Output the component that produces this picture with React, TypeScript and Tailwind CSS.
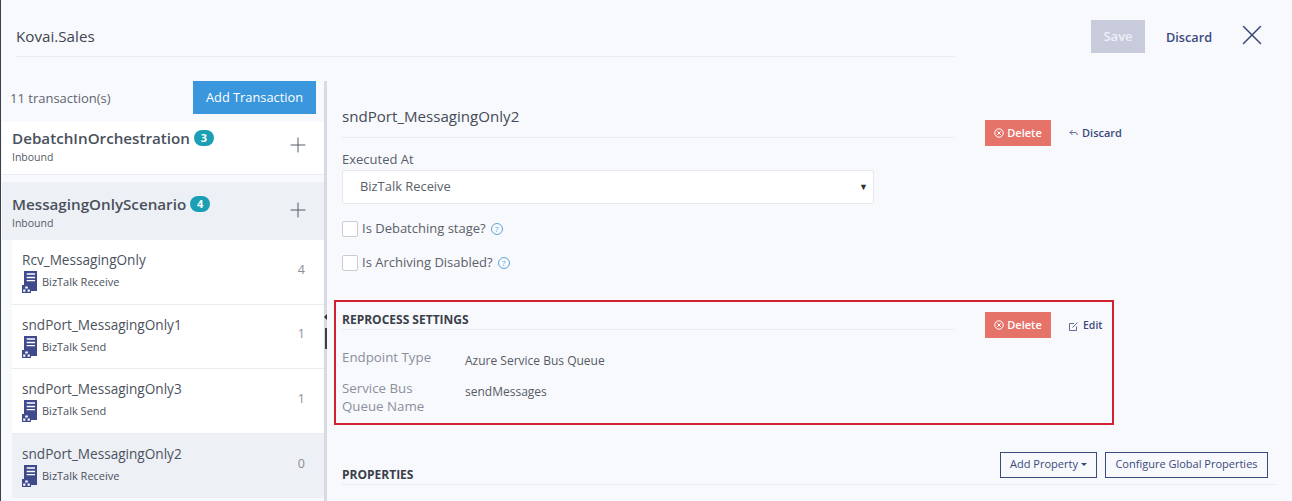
import { Plus, X } from 'lucide-react';

const font = 'font-["Open_Sans",sans-serif]';

const ServerIcon = () => (
  <svg width="16" height="22" viewBox="0 0 16 22" className="shrink-0">
    <path d="M2 0H15V20H2Z" fill="#3f4a8c" />
    <path d="M4.7 3H13M4.7 6.5H13M4.7 9.7H13" stroke="#ffffff" strokeWidth="1.3" />
    <path d="M0 14H9V22H0Z" fill="#3f4a8c" />
    <path d="M3.2 15.5H5.8V17.5H3.2ZM1.2 18.5H3.4V20.7H1.2ZM5.6 18.5H7.8V20.7H5.6Z" fill="#ffffff" />
  </svg>
);

const Badge = ({ n }: { n: number }) => (
  <span className="inline-flex h-[16px] w-[20px] items-center justify-center rounded-full bg-[#1a9fb5] text-[11px] font-bold text-white">
    {n}
  </span>
);

const Group = ({ name, count, active }: { name: string; count: number; active?: boolean }) => (
  <div className={`flex items-start justify-between pl-[10px] pr-[14px] ${active ? 'h-[58px] bg-[#edf0f5] pt-[10px]' : 'h-[53px] border-b border-[#e9ecf1] bg-white pt-[4px]'}`}>
    <div>
      <div className="flex items-center gap-[4px] text-[15.2px] font-semibold leading-[24px] text-[#4a505c]">
        {name} <Badge n={count} />
      </div>
      <div className="text-[10.5px] leading-[14px] text-[#555b66]">Inbound</div>
    </div>
    <Plus size={24} strokeWidth={1} className={`text-[#555b66] ${active ? 'mt-[6px]' : 'mt-[7px]'}`} />
  </div>
);

const Item = ({ name, kind, n, active }: { name: string; kind: string; n: number; active?: boolean }) => (
  <div className={`flex h-[64.5px] items-center justify-between pl-[10px] pr-[19px] ${active ? 'bg-[#edf0f5]' : 'border-b border-[#e9ecf1] bg-white'}`}>
    <div>
      <div className="text-[13.6px] leading-[20px] text-[#4c525e]">{name}</div>
      <div className="mt-px flex items-center gap-[4px]">
        <ServerIcon />
        <span className="text-[11px] text-[#4c525e]">{kind}</span>
      </div>
    </div>
    <span className="mt-[-3px] text-[12.5px] text-[#6f747c] opacity-80">{n}</span>
  </div>
);

const DeleteButton = () => (
  <button className="flex h-[26px] w-[66px] items-center justify-center gap-[3px] bg-[#e5736a] text-[11px] font-semibold text-white">
    <svg width="10" height="10" viewBox="0 0 10 10" fill="none" stroke="#fff" strokeWidth="1">
      <circle cx="5" cy="5" r="4.2" />
      <path d="M3.3 3.3L6.7 6.7M6.7 3.3L3.3 6.7" />
    </svg>
    Delete
  </button>
);

const HelpIcon = () => (
  <span className="ml-[5px] inline-flex h-[12px] w-[12px] items-center justify-center rounded-full border border-[#5aa5dc] text-[8px] leading-none text-[#5aa5dc]">?</span>
);

const Check = ({ label }: { label: string }) => (
  <div className="flex h-[34px] items-center">
    <span className="h-[16px] w-[16px] rounded-[2px] border border-[#c9ccd3] bg-white" />
    <span className="ml-[4px] text-[13px] text-[#5a606b]">{label}</span>
    <HelpIcon />
  </div>
);

export default function App() {
  return (
    <div className={`${font} h-[501px] w-[1292px] overflow-hidden border-l border-[#3a3f4c] bg-[#f8f9fc] pl-px`}>
      <header className="flex h-[81px] items-start">
        <div className="ml-[14px] flex h-[57px] w-[939px] items-center border-b border-[#e9ecf1] pt-[16px] text-[15.2px] text-[#3f4551]">
          Kovai.Sales
        </div>
        <button className="ml-[136px] mt-[20px] h-[33px] w-[54px] bg-[#c7cbdc] text-[13px] font-semibold text-[#eef0f6]">Save</button>
        <span className="ml-[21px] mt-[28px] text-[12.7px] font-semibold text-[#3b4a7c]">Discard</span>
        <X size={34} strokeWidth={1.1} className="ml-[23px] mt-[18px] text-[#3b4a7c]" />
      </header>

      <div className="flex">
        <aside className="h-[420px] w-[325px] shrink-0 border-r-[3px] border-[#d7dae2]">
          <div className="flex h-[41px] items-start justify-between pr-[8px]">
            <span className="ml-[8px] mt-[8px] text-[13px] text-[#5f6570]">11 transaction(s)</span>
            <button className="h-[33px] w-[123px] bg-[#3a96dd] pt-px text-[12.8px] font-medium text-white">Add Transaction</button>
          </div>
          <Group name="DebatchInOrchestration" count={3} />
          <div className="h-[7px]" />
          <Group name="MessagingOnlyScenario" count={4} active />
          <div className="ml-[10px]">
            <Item name="Rcv_MessagingOnly" kind="BizTalk Receive" n={4} />
            <Item name="sndPort_MessagingOnly1" kind="BizTalk Send" n={1} />
            <Item name="sndPort_MessagingOnly3" kind="BizTalk Send" n={1} />
            <Item name="sndPort_MessagingOnly2" kind="BizTalk Receive" n={0} active />
          </div>
        </aside>

        <main className="relative min-w-0 flex-1 pl-[15px]">
          <span className="absolute left-[-3px] top-[233px] h-0 w-0 border-y-[3px] border-r-[3px] border-y-transparent border-r-[#333]" />
          <span className="absolute left-[-2px] top-[247px] h-[21px] w-[2px] bg-[#3a3f4c]" />

          <div className="flex pt-[19px]">
            <div className="w-[613px]">
              <div className="flex h-[38px] items-start border-b border-[#e9ecf1] text-[15.1px] leading-[32px] text-[#444b57]">sndPort_MessagingOnly2</div>
              <div className="mt-[12px] text-[13px] leading-[18px] text-[#5a606b]">Executed At</div>
              <div className="mt-[2px] flex h-[34px] w-[532px] items-center justify-between rounded-[2px] border border-[#e6e8ee] bg-white pl-[17px] pr-[5px] text-[12.9px] text-[#5a606b]">
                BizTalk Receive
                <span className="text-[9px] text-[#333]">▼</span>
              </div>
              <div className="mt-[8px]"><Check label="Is Debatching stage?" /></div>
              <Check label="Is Archiving Disabled?" />
            </div>
            <div className="ml-[30px] mt-[20px] flex h-[26px] items-center">
              <DeleteButton />
              <span className="ml-[18px] flex items-center gap-[4px] text-[11px] font-semibold text-[#3b4a7c]">
                <svg width="9" height="8" viewBox="0 0 9 8" fill="none" stroke="#3b4a7c" strokeWidth="0.8">
                  <path d="M3.5 1L1 3.5L3.5 6M1 3.5H6C7.5 3.5 8.3 4.5 8.3 6" />
                </svg>
                Discard
              </span>
            </div>
          </div>

          <section className="ml-[-8px] mt-[20px] flex h-[125px] w-[780px] border-2 border-[#d0222e] pl-[6px] pt-[2px]">
            <div className="w-[613px]">
              <div className="flex h-[26px] items-center border-b border-[#e9ecf1] pt-[7px] text-[12px] font-bold text-[#3a3f4a]">REPROCESS SETTINGS</div>
              <div className="mt-[18px] flex items-start">
                <span className="w-[123px] text-[13.3px] leading-[18px] text-[#8b8f9c]">Endpoint Type</span>
                <span className="mt-[2px] text-[12px] leading-[22px] text-[#555b66]">Azure Service Bus Queue</span>
              </div>
              <div className="mt-[7px] flex items-start">
                <span className="w-[123px] text-[13.3px] leading-[18px] text-[#8b8f9c]">Service Bus<br />Queue Name</span>
                <span className="mt-[4px] text-[12px] leading-[18px] text-[#555b66]">sendMessages</span>
              </div>
            </div>
            <div className="ml-[30px] mt-[8px] flex h-[26px] items-center">
              <DeleteButton />
              <span className="ml-[18px] mt-[2px] flex items-center gap-[5px] text-[10.5px] font-semibold text-[#3b4a7c]">
                <svg width="9" height="9" viewBox="0 0 9 9" fill="none" stroke="#3b4a7c" strokeWidth="0.8">
                  <path d="M5 1.5H0.5V8.5H7.5V4.5M3.5 5.5L8.5 0.5" />
                </svg>
                Edit
              </span>
            </div>
          </section>

          <div className="mt-[27px] flex h-[33px] w-[934px] items-center justify-between border-b border-[#e9ecf1] pb-[1px]">
            <span className="mt-[14px] text-[12px] font-bold text-[#3a3f4a]">PROPERTIES</span>
            <div className="mb-[6px] mr-[8px] flex gap-[8px]">
              <button className="flex h-[26px] w-[97px] items-center justify-center gap-[3px] border border-[#3b4a7c] text-[11px] text-[#3b4a7c]">
                Add Property
                <span className="h-0 w-0 border-x-[3.5px] border-t-[3.5px] border-x-transparent border-t-[#3b4a7c]" />
              </button>
              <button className="h-[26px] w-[163px] border border-[#3b4a7c] text-[11px] text-[#3b4a7c]">Configure Global Properties</button>
            </div>
          </div>
        </main>
      </div>
    </div>
  );
}
